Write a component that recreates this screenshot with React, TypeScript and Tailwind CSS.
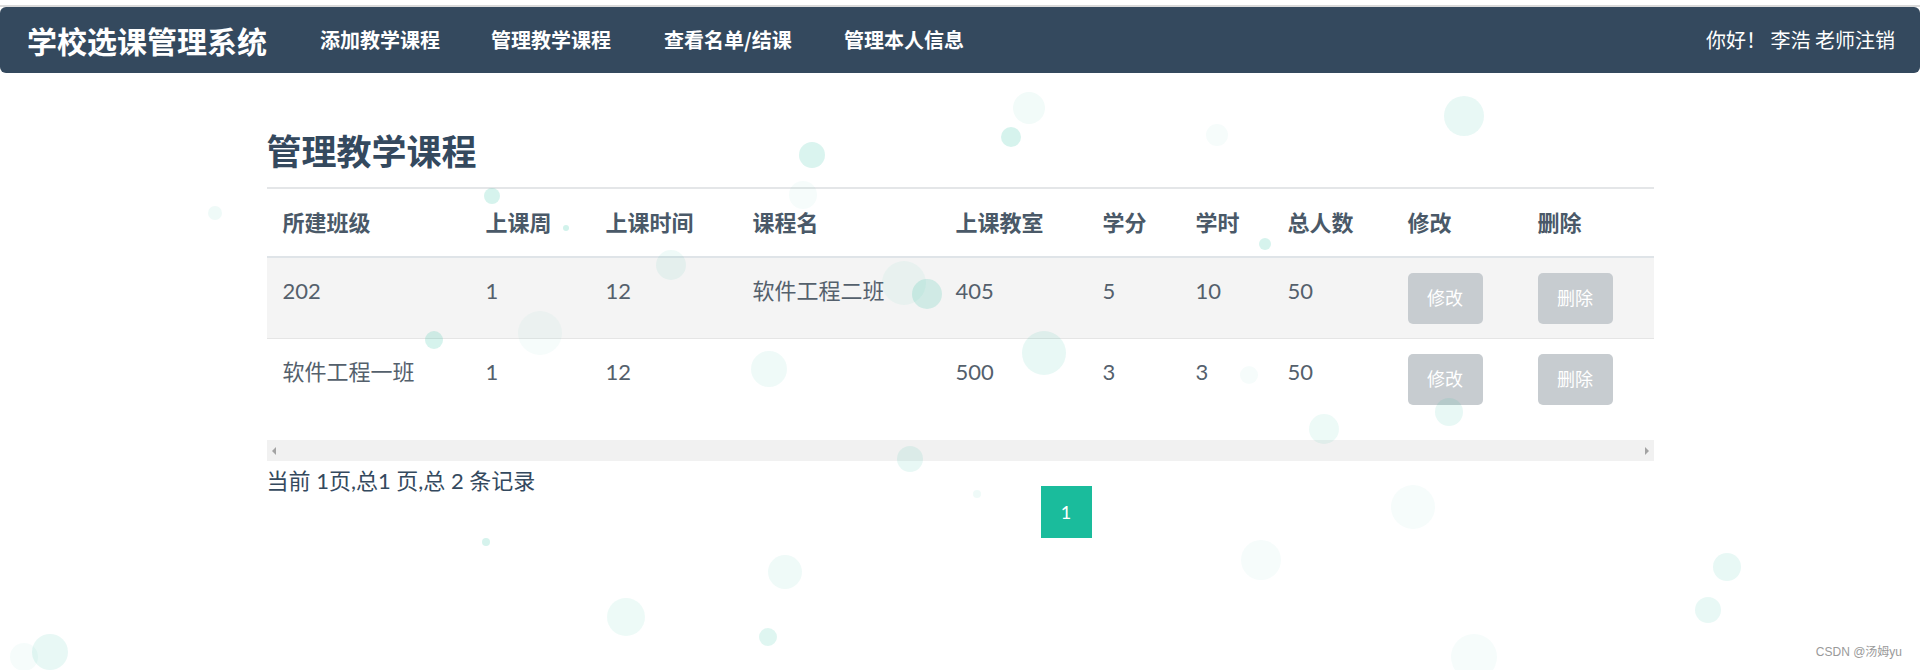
import React from "react";

type Bubble = [number, number, number, number];

const bubbles: Bubble[] = [
  [1029, 108, 16, 0.06],
  [1011, 137, 10, 0.18],
  [812, 155, 13, 0.16],
  [1464, 116, 20, 0.1],
  [1217, 135, 11, 0.04],
  [492, 196, 8, 0.18],
  [803, 195, 14, 0.04],
  [215, 213, 7, 0.07],
  [566, 228, 3, 0.2],
  [1265, 244, 6, 0.18],
  [671, 265, 15, 0.07],
  [904, 283, 22, 0.05],
  [927, 294, 15, 0.16],
  [540, 333, 22, 0.04],
  [434, 340, 9, 0.18],
  [769, 369, 18, 0.07],
  [1044, 353, 22, 0.1],
  [1249, 375, 9, 0.04],
  [1449, 412, 14, 0.1],
  [1324, 429, 15, 0.08],
  [910, 459, 13, 0.1],
  [977, 494, 4, 0.07],
  [1413, 507, 22, 0.04],
  [486, 542, 4, 0.18],
  [785, 572, 17, 0.07],
  [1261, 560, 20, 0.04],
  [1727, 567, 14, 0.1],
  [1708, 610, 13, 0.1],
  [626, 617, 19, 0.08],
  [768, 637, 9, 0.14],
  [50, 652, 18, 0.1],
  [24, 657, 14, 0.04],
  [1474, 657, 23, 0.04],
];

const headers = ["所建班级", "上课周", "上课时间", "课程名", "上课教室", "学分", "学时", "总人数", "修改", "删除"];
const widths = [203, 120, 147, 203, 147, 93, 92, 120, 130, 132];

const rows = [
  ["202", "1", "12", "软件工程二班", "405", "5", "10", "50"],
  ["软件工程一班", "1", "12", "", "500", "3", "3", "50"],
];

function GrayButton({ label }: { label: string }) {
  return (
    <div className="w-[75px] h-[51px] rounded-[5px] bg-[#c7ccd0] text-white text-[18px] flex items-center justify-center">
      {label}
    </div>
  );
}

export default function App() {
  return (
    <div
      className="relative h-[670px] w-[1920px] overflow-hidden bg-white"
      style={{ fontFamily: 'Lato, "Noto Sans CJK SC", sans-serif' }}
    >
      <div className="h-[5px] bg-white" />
      <div className="h-[2px] bg-[#dadada]" />
      <nav
        className="h-[66px] bg-[#34495e] rounded-[6px] flex items-center text-white pl-[27px] pr-[25px]"
        style={{ fontFamily: '"Noto Sans CJK SC", sans-serif' }}
      >
        <div className="text-[30px] font-bold leading-none w-[293px]">学校选课管理系统</div>
        <div className="text-[20px] font-bold leading-none w-[171px]">添加教学课程</div>
        <div className="text-[20px] font-bold leading-none w-[173px]">管理教学课程</div>
        <div className="text-[20px] font-bold leading-none w-[180px]">查看名单/结课</div>
        <div className="text-[20px] font-bold leading-none">管理本人信息</div>
        <div className="ml-auto text-[20px] leading-none whitespace-pre">你好！ 李浩 老师注销</div>
      </nav>

      <div className="w-[1387px] mx-auto">
        <h2 className="mt-[60px] mb-[18px] text-[35px] leading-[36px] font-bold text-[#34495e]">管理教学课程</h2>
        <table className="table-fixed border-collapse w-[1387px] border-t-2 border-[#e4e6e8] mb-[20px]">
          <colgroup>
            {widths.map((w, i) => (
              <col key={i} style={{ width: w }} />
            ))}
          </colgroup>
          <thead>
            <tr className="h-[69px] border-b-2 border-[#dfe4e8]">
              {headers.map((h) => (
                <th
                  key={h}
                  className="text-left pl-[16px] align-middle text-[22px] font-semibold text-[#4a5968]"
                >
                  {h}
                </th>
              ))}
            </tr>
          </thead>
          <tbody>
            {rows.map((r, ri) => (
              <tr
                key={ri}
                className={ri === 0 ? "bg-[#f4f4f4] h-[81px]" : "bg-transparent h-[82px] border-t border-[#e5e5e5]"}
              >
                {r.map((c, ci) => (
                  <td
                    key={ci}
                    className="pl-[16px] pt-[17px] align-top text-[22px] leading-[31px] text-[#54606c]"
                  >
                    {c}
                  </td>
                ))}
                <td className="pl-[16px] pt-[15px] align-top">
                  <GrayButton label="修改" />
                </td>
                <td className="pl-[16px] pt-[15px] align-top">
                  <GrayButton label="删除" />
                </td>
              </tr>
            ))}
          </tbody>
        </table>

        <div className="h-[21px] bg-[#f1f1f1] flex items-center justify-between px-[5px]">
          <svg width="5" height="8" viewBox="0 0 5 8">
            <path d="M4 0 L0 4 L4 8 Z" fill="#a3a3a3" />
          </svg>
          <svg width="5" height="8" viewBox="0 0 5 8">
            <path d="M1 0 L5 4 L1 8 Z" fill="#a3a3a3" />
          </svg>
        </div>

        <div className="flex items-start">
          <div className="w-[774px] pt-[4px] text-[22px] leading-[31px] text-[#34495e]">
            当前 1页,总1 页,总 2 条记录
          </div>
          <div className="mt-[25px] w-[51px] h-[52px] bg-[#1abc9c] text-white text-[18px] flex items-center justify-center">
            1
          </div>
        </div>
      </div>

      <div className="pointer-events-none absolute inset-0">
        {bubbles.map(([x, y, r, a], i) => (
          <div
            key={i}
            className="absolute rounded-full"
            style={{
              left: x - r,
              top: y - r,
              width: r * 2,
              height: r * 2,
              backgroundColor: `rgba(26,188,156,${a})`,
            }}
          />
        ))}
      </div>

      <div
        className="absolute right-[18px] top-[645px] text-[12px] leading-[14px] text-[#9a9a9a]"
        style={{ fontFamily: '"Liberation Sans", "Noto Sans CJK SC", sans-serif' }}
      >
        CSDN @汤姆yu
      </div>
    </div>
  );
}
